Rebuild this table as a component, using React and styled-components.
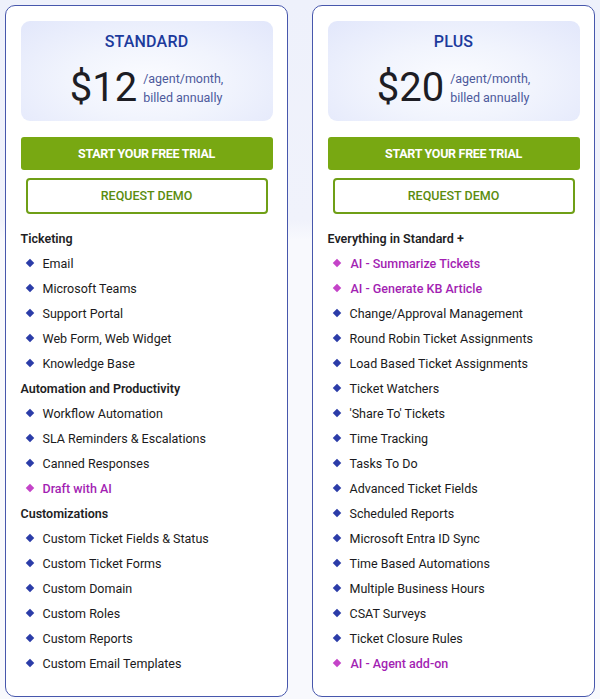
import styled, { createGlobalStyle } from "styled-components";

const GlobalStyle = createGlobalStyle`
  body {
    margin: 0;
    font-family: Roboto, "Liberation Sans", Arial, sans-serif;
    background: linear-gradient(180deg, #eef1fb 0px, #f0f2fb 220px, #f8f9fd 240px, #f8f9fd 100%);
  }
`;

const Page = styled.div`
  display: grid;
  grid-template-columns: 283px 283px;
  gap: 24px;
  padding: 5px 5px 3px;
  height: 699px;
  box-sizing: border-box;
`;

const Card = styled.div`
  background: #fff;
  border: 1.5px solid #4757ac;
  border-radius: 10px;
  padding: 14.5px 0 20px;
  display: flex;
  flex-direction: column;
  box-sizing: border-box;
`;

const PriceBox = styled.div`
  margin: 0 14.5px;
  height: 100px;
  border-radius: 9px;
  background: radial-gradient(ellipse at 50% 60%, #fbfcff 0%, #f1f4fd 45%, #e2e7fb 100%);
  display: flex;
  flex-direction: column;
  align-items: center;
`;

const PlanName = styled.div`
  margin-top: 11px;
  font-size: 16px;
  font-weight: 500;
  color: #1c3a9c;
  letter-spacing: 0.2px;
`;

const PriceRow = styled.div`
  display: flex;
  align-items: center;
  gap: 6px;
  margin-top: 17px;
`;

const Amount = styled.div`
  font-size: 40px;
  font-weight: 400;
  color: #1d1d24;
  line-height: 1;
`;

const Period = styled.div`
  font-size: 12.5px;
  line-height: 19px;
  color: #4d5a9c;
  padding-top: 1px;
`;

const Actions = styled.div`
  display: flex;
  flex-direction: column;
  gap: 8px;
  margin-top: 16px;
  padding: 0 14.5px;
`;

const Button = styled.button`
  font-family: inherit;
  height: ${(p) => (p.primary ? "33px" : "36px")};
  margin: ${(p) => (p.primary ? "0" : "0 5px")};
  border-radius: ${(p) => (p.primary ? "3px" : "4px")};
  border: ${(p) => (p.primary ? "none" : "2px solid #6f9f16")};
  background: ${(p) => (p.primary ? "#78a812" : "#fff")};
  color: ${(p) => (p.primary ? "#fff" : "#5b8c0e")};
  font-size: 12.5px;
  font-weight: ${(p) => (p.primary ? 700 : 500)};
  letter-spacing: ${(p) => (p.primary ? "-0.3px" : "0")};
  text-transform: uppercase;
  cursor: pointer;
`;

const Features = styled.ul`
  list-style: none;
  margin: 12px 0 0;
  padding: 0 14.5px;
`;

const Heading = styled.li`
  height: 25px;
  display: flex;
  align-items: center;
  font-size: 12.5px;
  font-weight: 600;
  color: #1e1e24;
`;

const Item = styled.li`
  height: 25px;
  display: flex;
  align-items: center;
  gap: ${(p) => (p.ai && p.shift ? "10px" : "9px")};
  padding-left: 5px;
  font-size: 12.5px;
  font-weight: ${(p) => (p.ai ? 500 : 400)};
  color: ${(p) => (p.ai ? "#a31fb3" : "#1a1a20")};
`;

const Diamond = styled.span`
  width: 6px;
  height: 6px;
  margin: 0 1px;
  background: ${(p) => (p.ai ? "#c443c8" : "#2b3ca8")};
  transform: rotate(45deg);
  flex-shrink: 0;
`;

const plans = [
  {
    name: "STANDARD",
    price: "$12",
    features: [
      { heading: "Ticketing" },
      "Email",
      "Microsoft Teams",
      "Support Portal",
      "Web Form, Web Widget",
      "Knowledge Base",
      { heading: "Automation and Productivity" },
      "Workflow Automation",
      "SLA Reminders & Escalations",
      "Canned Responses",
      { ai: "Draft with AI" },
      { heading: "Customizations" },
      "Custom Ticket Fields & Status",
      "Custom Ticket Forms",
      "Custom Domain",
      "Custom Roles",
      "Custom Reports",
      "Custom Email Templates",
    ],
  },
  {
    name: "PLUS",
    price: "$20",
    shift: true,
    features: [
      { heading: "Everything in Standard +" },
      { ai: "AI - Summarize Tickets" },
      { ai: "AI - Generate KB Article" },
      "Change/Approval Management",
      "Round Robin Ticket Assignments",
      "Load Based Ticket Assignments",
      "Ticket Watchers",
      "'Share To' Tickets",
      "Time Tracking",
      "Tasks To Do",
      "Advanced Ticket Fields",
      "Scheduled Reports",
      "Microsoft Entra ID Sync",
      "Time Based Automations",
      "Multiple Business Hours",
      "CSAT Surveys",
      "Ticket Closure Rules",
      { ai: "AI - Agent add-on" },
    ],
  },
];

function Feature({ f, shift }) {
  if (typeof f === "string") {
    return (
      <Item>
        <Diamond />
        {f}
      </Item>
    );
  }
  if (f.heading) return <Heading>{f.heading}</Heading>;
  return (
    <Item ai shift={shift}>
      <Diamond ai />
      {f.ai}
    </Item>
  );
}

export default function App() {
  return (
    <>
      <GlobalStyle />
      <Page>
        {plans.map((plan) => (
          <Card key={plan.name}>
            <PriceBox>
              <PlanName>{plan.name}</PlanName>
              <PriceRow>
                <Amount>{plan.price}</Amount>
                <Period>
                  /agent/month,
                  <br />
                  billed annually
                </Period>
              </PriceRow>
            </PriceBox>
            <Actions>
              <Button primary>Start your free trial</Button>
              <Button>Request demo</Button>
            </Actions>
            <Features>
              {plan.features.map((f, i) => (
                <Feature key={i} f={f} shift={plan.shift} />
              ))}
            </Features>
          </Card>
        ))}
      </Page>
    </>
  );
}
